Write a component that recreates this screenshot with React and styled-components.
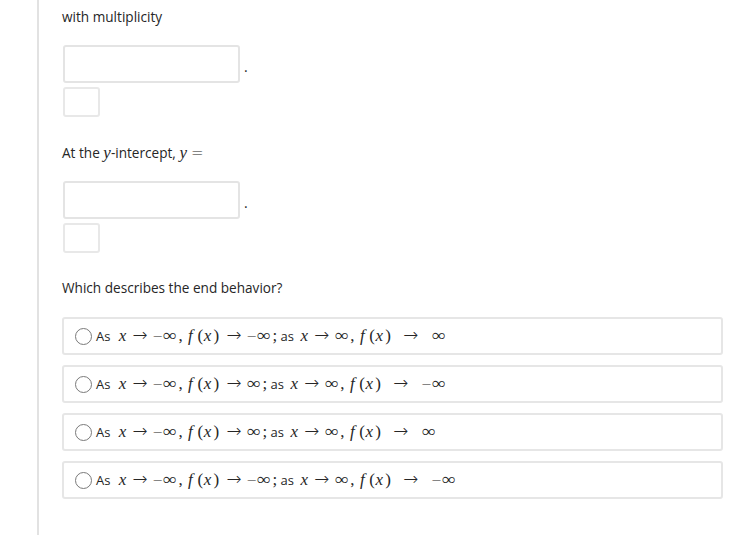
import React from "react";
import styled, { createGlobalStyle } from "styled-components";

const Global = createGlobalStyle`
  html, body { margin: 0; padding: 0; background: #fff; }
  body { font-family: "Open Sans", "Liberation Sans", sans-serif; color: #262626; }
`;

const Page = styled.div`
  display: flex;
  min-height: 535px;
`;

const Rail = styled.div`
  width: 37px;
  flex: none;
  border-right: 2px solid #e2e2e2;
`;

const Content = styled.div`
  flex: 1;
  padding: 7px 12px 0 23px;
  display: flex;
  flex-direction: column;
`;

const Prompt = styled.div`
  font-size: 13.6px;
  line-height: 20px;
  margin-top: ${(p) => p.$top || 0}px;
`;

const AnswerRow = styled.div`
  display: flex;
  align-items: center;
  margin-top: ${(p) => p.$top || 0}px;
`;

const TextBox = styled.div`
  width: 177px;
  height: 38px;
  box-sizing: border-box;
  border: 2px solid #e4e4e4;
  border-radius: 3px;
  margin-left: 1px;
`;

const Period = styled.span`
  font-size: 14px;
  margin-left: 4px;
  padding-top: 4px;
`;

const SmallBox = styled.div`
  width: 37px;
  height: 30px;
  box-sizing: border-box;
  border: 2px solid #e8e8e8;
  border-radius: 3px;
  margin: 4px 0 0 1px;
`;

const Options = styled.div`
  display: flex;
  flex-direction: column;
  gap: 10px;
  margin-top: 19px;
`;

const Option = styled.label`
  display: flex;
  align-items: center;
  height: 38px;
  box-sizing: border-box;
  border: 2px solid #e6e6e6;
  border-radius: 3px;
  padding-left: 11px;
  font-size: 13px;
`;

const Radio = styled.span`
  width: 17px;
  height: 17px;
  box-sizing: border-box;
  border-radius: 50%;
  border: 1px solid #7a7a7a;
  background: #fff;
  flex: none;
  margin-right: 4px;
`;

const Lead = styled.span`
  margin-right: 7px;
`;

const Joiner = styled.span`
  margin: 0 2px 0 0;
`;

const MathText = styled.span`
  font-family: "Liberation Serif", "DejaVu Serif", serif;
  font-size: 17px;
  white-space: nowrap;
`;

const InlineVar = styled.span`
  font-family: "Liberation Serif", "DejaVu Serif", serif;
  font-style: italic;
  font-size: 17px;
  margin-right: ${(p) => p.$r || 0}px;
`;

const Var = styled.span`
  display: inline-block;
  width: ${(p) => p.$w}px;
  margin-left: ${(p) => p.$ml || 0}px;
  text-align: center;
  font-style: italic;
`;

const Arrow = styled.span`
  display: inline-block;
  width: 15px;
  margin: 0 ${(p) => p.$r}px 0 ${(p) => p.$l}px;
  text-align: center;
  font-family: "DejaVu Sans", sans-serif;
  font-weight: 200;
  font-size: 18px;
  line-height: 1;
`;

const Minus = styled.span`
  display: inline-block;
  width: 10px;
  text-align: center;
  font-family: "DejaVu Sans", sans-serif;
  font-weight: 200;
  font-size: ${(p) => p.$fs || 13}px;
`;

const Sym = styled.span`
  display: inline-block;
  width: ${(p) => p.$w}px;
  margin-left: ${(p) => p.$ml || 0}px;
  text-align: center;
`;

const Inf = styled.span`
  display: inline-block;
  width: 16px;
  text-align: center;
  transform: scaleX(1.15);
`;

const Lim = ({ neg }) => (
  <>
    {neg ? <Minus>{"\u2212"}</Minus> : null}
    <Inf>∞</Inf>
  </>
);

const Expr = ({ a, b, wide }) => (
  <MathText>
    <Var $w={10}>x</Var>
    <Arrow $l={5} $r={5}>→</Arrow>
    <Lim neg={a} />
    <Sym $w={4}>,</Sym>
    <Var $w={8} $ml={4}>f</Var>
    <Sym $w={5} $ml={3}>(</Sym>
    <Var $w={10}>x</Var>
    <Sym $w={5} $ml={1}>)</Sym>
    <Arrow $l={wide ? 13 : 8} $r={wide ? 13 : 5}>→</Arrow>
    <Lim neg={b} />
  </MathText>
);

const choices = [
  [true, true, false, false],
  [true, false, false, true],
  [true, false, false, false],
  [true, true, false, true],
];

export default function App() {
  return (
    <>
      <Global />
      <Page>
        <Rail />
        <Content>
          <Prompt>with multiplicity</Prompt>
          <AnswerRow $top={18}>
            <TextBox />
            <Period>.</Period>
          </AnswerRow>
          <SmallBox />
          <Prompt $top={26}>
            At the <InlineVar>y</InlineVar>-intercept, <InlineVar $r={4}>y</InlineVar>
            <Minus $fs={15}>=</Minus>
          </Prompt>
          <AnswerRow $top={18}>
            <TextBox />
            <Period>.</Period>
          </AnswerRow>
          <SmallBox />
          <Prompt $top={25}>Which describes the end behavior?</Prompt>
          <Options>
            {choices.map((c, i) => (
              <Option key={i}>
                <Radio />
                <Lead>As</Lead>
                <Expr a={c[0]} b={c[1]} />
                <MathText>;</MathText>
                <Joiner>&nbsp;as&nbsp;</Joiner>
                <Expr a={c[2]} b={c[3]} wide />
              </Option>
            ))}
          </Options>
        </Content>
      </Page>
    </>
  );
}
